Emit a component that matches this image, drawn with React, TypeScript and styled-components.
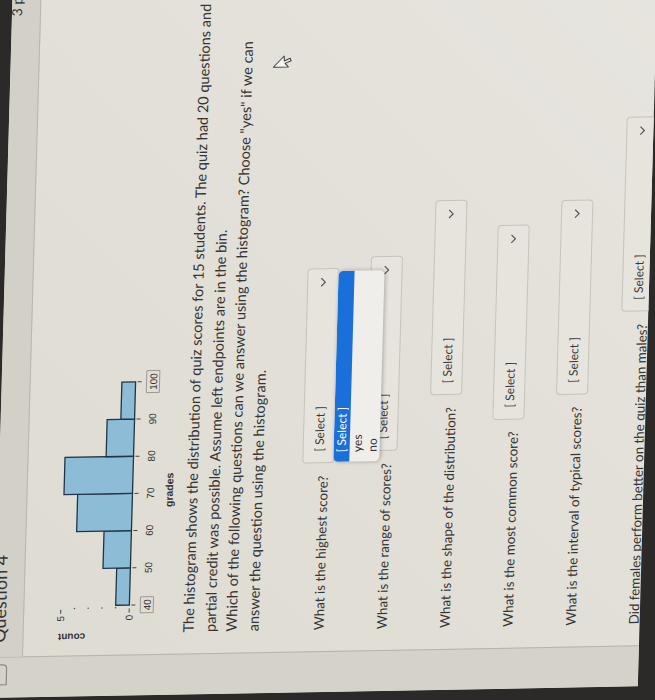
import * as React from "react";
import styled, { createGlobalStyle } from "styled-components";

const GlobalStyle = createGlobalStyle`
  html, body {
    margin: 0;
    padding: 0;
    background: #2b2a28;
    overflow: hidden;
  }
`;

// the photo was taken sideways: the page is laid out upright and then turned
const Viewport = styled.div`
  width: 655px;
  height: 700px;
  overflow: hidden;
  position: relative;
  background: #2b2a28;
`;

const Screen = styled.div`
  width: 760px;
  height: 645px;
  display: flex;
  position: relative;
  overflow: hidden;
  transform-origin: 0 0;
  transform: matrix(0.028, -1, 1, -0.018, -7.18, 697.95);
  background: linear-gradient(135deg, #dedbd2 0%, #e2e0d8 55%, #e7e5df 100%);
  color: #353535;
  font-family: Lato, "Open Sans", "Liberation Sans", sans-serif;
`;

const Gutter = styled.div`
  width: 40px;
  flex: none;
  background: #d5d2ca;
  border-right: 1px solid #b6b3ab;
`;

const Bookmark = styled.svg`
  display: block;
  margin: -6px 0 0 11px;
`;

const QuestionBox = styled.div`
  flex: 1;
  display: flex;
  flex-direction: column;
`;

const Header = styled.div`
  height: 29px;
  box-sizing: border-box;
  display: flex;
  align-items: center;
  padding: 0 48px 20px 14px;
  background: #d3d0c8;
  border-bottom: 1px solid #b8b5ad;
`;

const Title = styled.h2`
  margin: 0;
  font-size: 18px;
  font-weight: 400;
`;

const Points = styled.span`
  margin-left: auto;
  font-size: 14px;
`;

const Body = styled.div`
  flex: 1;
  padding: 16px 0 0 21px;
`;

const Chart = styled.svg`
  display: block;
  overflow: visible;
  font-family: "Liberation Sans", Arial, sans-serif;
`;

const Prompt = styled.p`
  margin: 2px 0 0;
  font-size: 14.5px;
  line-height: 21.5px;
  white-space: nowrap;
`;

const Questions = styled.div`
  margin-top: 34px;
  display: flex;
  flex-direction: column;
  gap: 31px;
`;

const Row = styled.div`
  display: flex;
  align-items: flex-end;
  gap: 12px;
  height: 32px;
  font-size: 13.4px;
  line-height: 21px;
  white-space: nowrap;
`;

const Select = styled.div`
  position: relative;
  flex: none;
  width: 195px;
  height: 32px;
  box-sizing: border-box;
  display: flex;
  align-items: center;
  justify-content: space-between;
  padding: 0 8px 0 11px;
  border: 1px solid #c6c3bb;
  border-radius: 4px;
  background: #e6e4dd;
  font-size: 12px;
  color: #3a3a3a;
`;

const Menu = styled.div`
  position: absolute;
  top: 100%;
  left: 0;
  width: 191px;
  border-radius: 5px;
  overflow: hidden;
  background: #efeeea;
  box-shadow: 0 1px 4px rgba(0, 0, 0, 0.28);
  z-index: 2;
`;

const Option = styled.div<{ $active?: boolean }>`
  height: ${(p) => (p.$active ? "16px" : "15px")};
  line-height: ${(p) => (p.$active ? "16px" : "15px")};
  padding-left: 10px;
  font-size: 12px;
  background: ${(p) => (p.$active ? "#1b6fd8" : "transparent")};
  color: ${(p) => (p.$active ? "#ffffff" : "#333333")};
`;

const Cursor = styled.svg`
  position: absolute;
  left: 625px;
  top: 262px;
  z-index: 3;
`;

const bins = [1, 2, 4, 5, 2, 1];
const unit = 13.7;
const base = 89;
const x0 = 28.5;
const bw = 37.2;
const ticks = ["40", "50", "60", "70", "80", "90", "100"];

const Histogram: React.FC = () => (
  <Chart width={300} height={136}>
    {bins.map((c, i) => (
      <rect
        key={i}
        x={x0 + i * bw}
        y={base - c * unit}
        width={bw}
        height={c * unit}
        fill="#8dbcd6"
        stroke="#1f3445"
        strokeWidth={1.3}
      />
    ))}
    {[1, 2, 3, 4].map((c) => (
      <circle key={c} cx={26} cy={base - c * unit} r={0.8} fill="#555" />
    ))}
    <line x1={21} x2={25} y1={base} y2={base} stroke="#444" />
    <line x1={21} x2={25} y1={base - 5 * unit} y2={base - 5 * unit} stroke="#444" />
    <text x={16} y={base + 3.5} fontSize={10} textAnchor="middle" fill="#333">
      0
    </text>
    <text x={16} y={base - 5 * unit + 3.5} fontSize={10} textAnchor="middle" fill="#333">
      5
    </text>
    <text
      x={-2}
      y={35}
      fontSize={10}
      fontWeight="bold"
      textAnchor="middle"
      fill="#333"
      transform="rotate(-90 -2 32)"
    >
      count
    </text>
    {ticks.map((t, i) => {
      const x = x0 + i * bw;
      const boxed = i === 0 || i === ticks.length - 1;
      const w = t.length * 6 + 4;
      return (
        <g key={t}>
          <line x1={x} x2={x} y1={91} y2={95} stroke="#444" />
          {boxed && (
            <rect x={x - w / 2} y={100} width={w} height={13} fill="none" stroke="#8a8a8a" strokeWidth={0.8} />
          )}
          <text x={x} y={110.5} fontSize={10} textAnchor="middle" fill="#333">
            {t}
          </text>
        </g>
      );
    })}
    <text x={143} y={129.5} fontSize={10.5} fontWeight="bold" textAnchor="middle" fill="#333">
      grades
    </text>
  </Chart>
);

const Chevron: React.FC = () => (
  <svg width="10" height="6" viewBox="0 0 10 6">
    <polyline points="1,1 5,5 9,1" fill="none" stroke="#555" strokeWidth="1.2" />
  </svg>
);

const questions = [
  "What is the highest score?",
  "What is the range of scores?",
  "What is the shape of the distribution?",
  "What is the most common score?",
  "What is the interval of typical scores?",
  "Did females perform better on the quiz than males?",
];

export default function App() {
  return (
    <>
      <GlobalStyle />
      <Viewport>
        <Screen>
          <Gutter>
            <Bookmark width="24" height="20" viewBox="0 0 24 20">
              <path d="M2 1 H18 Q22 1 22 5 V15 Q22 19 18 19 H2 Z" fill="none" stroke="#8f8c86" strokeWidth="1.3" />
            </Bookmark>
          </Gutter>
          <QuestionBox>
            <Header>
              <Title>Question 4</Title>
              <Points>3 pts</Points>
            </Header>
            <Body>
              <Histogram />
              <Prompt>
                The histogram shows the distribution of quiz scores for 15 students. The quiz had 20 questions and
                <br />
                partial credit was possible. Assume left endpoints are in the bin.
                <br />
                Which of the following questions can we answer using the histogram? Choose "yes" if we can
                <br />
                answer the question using the histogram.
              </Prompt>
              <Questions>
                {questions.map((q, i) => (
                  <Row key={q}>
                    <span>{q}</span>
                    <Select>
                      <span>[ Select ]</span>
                      <Chevron />
                      {i === 0 && (
                        <Menu>
                          <Option $active>[ Select ]</Option>
                          <Option>yes</Option>
                          <Option>no</Option>
                        </Menu>
                      )}
                    </Select>
                  </Row>
                ))}
              </Questions>
            </Body>
          </QuestionBox>
          <Cursor width="14" height="20" viewBox="0 0 14 20">
            <path d="M1 1 L1 16 L4.6 12.6 L7.2 18.6 L9.6 17.6 L7 11.8 L12 11.6 Z" fill="#f4f4f2" stroke="#3a3a3a" strokeWidth="1" strokeLinejoin="round" />
          </Cursor>
        </Screen>
      </Viewport>
    </>
  );
}
